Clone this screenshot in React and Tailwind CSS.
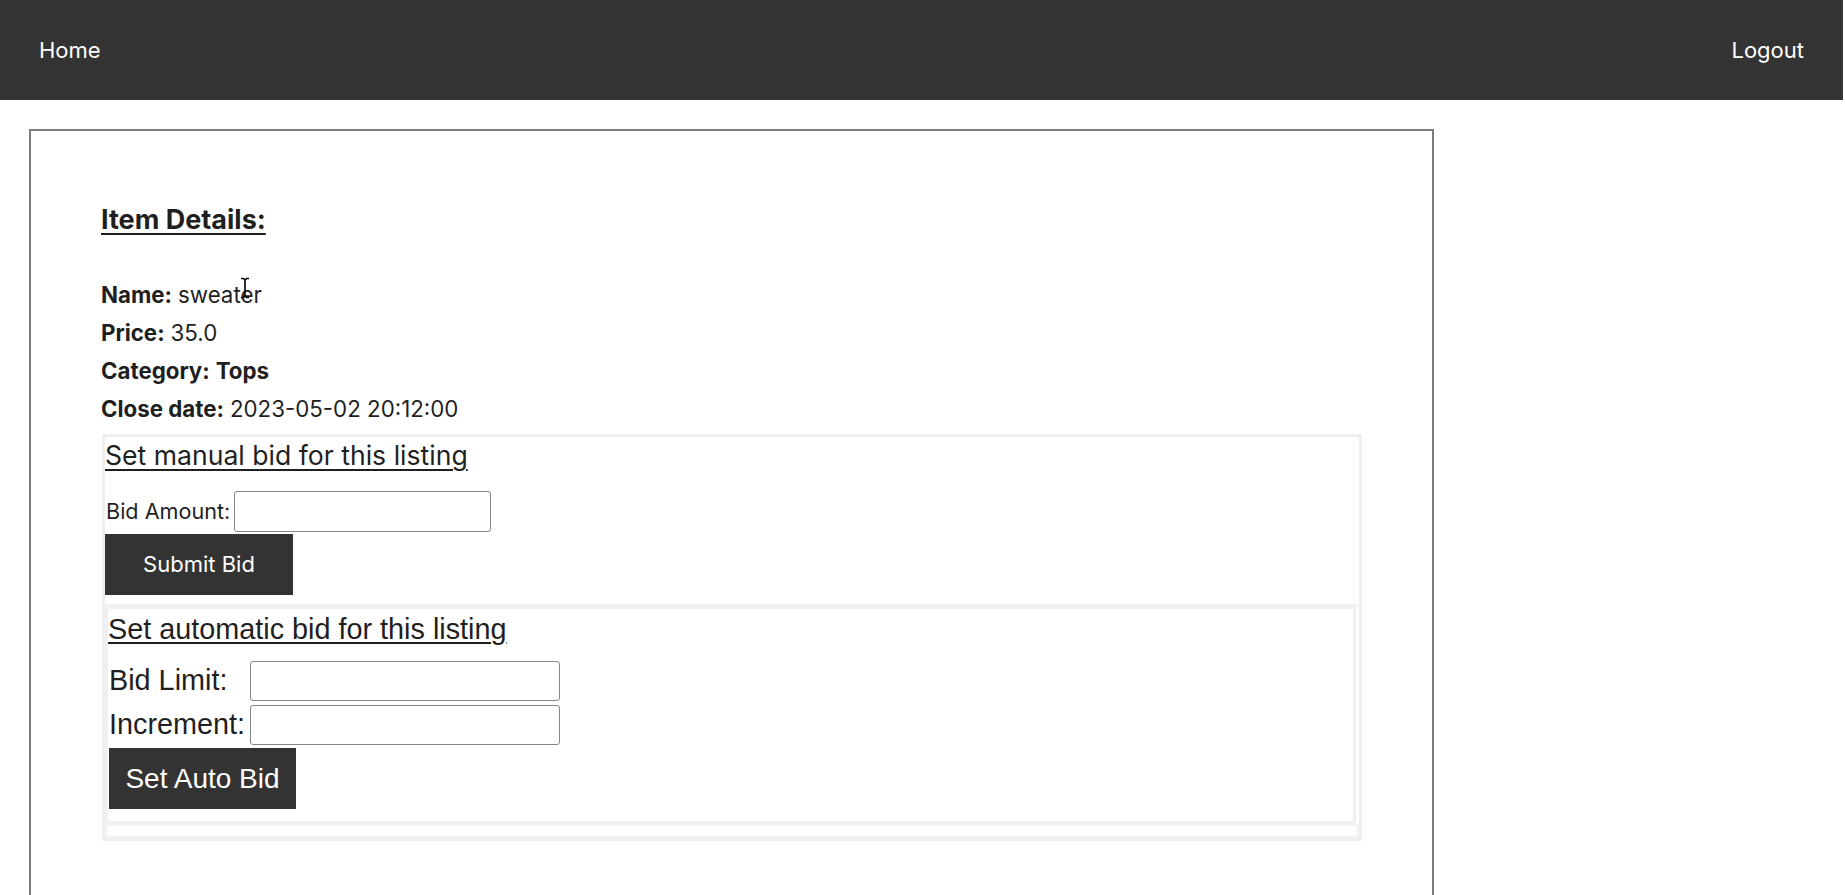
import React from 'react';

const inter = { fontFamily: 'Inter, "Noto Sans", sans-serif' };

const DetailRow = ({ label, value, children }) => (
  <div className="h-[38px] flex items-center text-[22.3px] text-[#1f1f1f]">
    <span className="font-bold">{label}</span>
    <span className="ml-[6px] relative">
      {value}
      {children}
    </span>
  </div>
);

const App = () => {
  return (
    <div className="min-h-screen bg-white font-['Inter',sans-serif] overflow-hidden h-[895px]">
      <nav className="h-[100px] mr-[2px] bg-[#343333] flex items-center justify-between px-[39px] text-white text-[22px]">
        <a href="#" className="text-white">Home</a>
        <a href="#" className="text-white">Logout</a>
      </nav>

      <div className="ml-[29px] mt-[29px] w-[1405px] h-[830px] border-2 border-[#7b7b7b] pl-[70px] pt-[73px]">
        <h2 className="text-[27px] leading-[32px] font-bold text-[#1f1f1f] underline decoration-2 underline-offset-[4px]">
          Item Details:
        </h2>

        <div className="mt-[40px]">
          <DetailRow label="Name:" value="sweater">
            <svg className="absolute left-[62px] top-[-1px]" width="10" height="22" viewBox="0 0 10 22">
              <path d="M1 1.5 H3.5 L5 3 L6.5 1.5 H9 M5 3 V19 M1 20.5 H3.5 L5 19 L6.5 20.5 H9" fill="none" stroke="#000" strokeWidth="1.6" />
            </svg>
          </DetailRow>
          <DetailRow label="Price:" value="35.0" />
          <DetailRow label="Category:" value={<span className="font-bold">Tops</span>} />
          <DetailRow label="Close date:" value="2023-05-02 20:12:00" />
        </div>

        <div className="mt-[6px] ml-[1px] w-[1260px] border-[3px] border-[#efefef]">
          {/* manual bid */}
          <form className="border-b-2 border-[#f2f2f2] pt-[2px] pb-[9px]" onSubmit={e => e.preventDefault()}>
            <h3 className="text-[26.6px] leading-[32px] text-[#1f1f1f] underline decoration-2 underline-offset-[4px]" style={inter}>
              Set manual bid for this listing
            </h3>
            <div className="mt-[20px] flex items-center">
              <label className="w-[129px] pl-[1px] text-[21.6px] text-[#1f1f1f]">Bid Amount:</label>
              <input type="text" className="w-[257px] h-[41px] border border-[#858585] rounded-[3px] bg-white outline-none" />
            </div>
            <button type="submit" className="mt-[2px] w-[188px] h-[61px] bg-[#333333] text-white text-[22px]">
              Submit Bid
            </button>
          </form>

          {/* automatic bid */}
          <form className="mr-[3px] border-[3px] border-[#f0f0f0] pt-[4px] pb-[12px] font-['Liberation_Sans',Arial,sans-serif] text-[#1f1f1f]" onSubmit={e => e.preventDefault()}>
            <h3 className="text-[28.8px] leading-[32px] underline decoration-2 underline-offset-[3px]">
              Set automatic bid for this listing
            </h3>
            <div className="mt-[14px] flex items-center">
              <label className="w-[142px] pl-[1px] text-[28.8px]">Bid Limit:</label>
              <input type="text" className="w-[310px] h-[40px] border border-[#858585] rounded-[3px] bg-white outline-none" />
            </div>
            <div className="mt-[1px] flex items-center">
              <label className="w-[142px] pl-[1px] text-[28.8px]">Increment:</label>
              <input type="text" className="w-[310px] h-[40px] border border-[#858585] rounded-[3px] bg-white outline-none" />
            </div>
            <button type="submit" className="mt-[2px] ml-[1px] w-[187px] h-[61px] bg-[#333333] text-white text-[28px]">
              Set Auto Bid
            </button>
          </form>

          <div className="h-[14px] border-2 border-[#f3f3f3]"></div>
        </div>
      </div>
    </div>
  );
};

export default App;
